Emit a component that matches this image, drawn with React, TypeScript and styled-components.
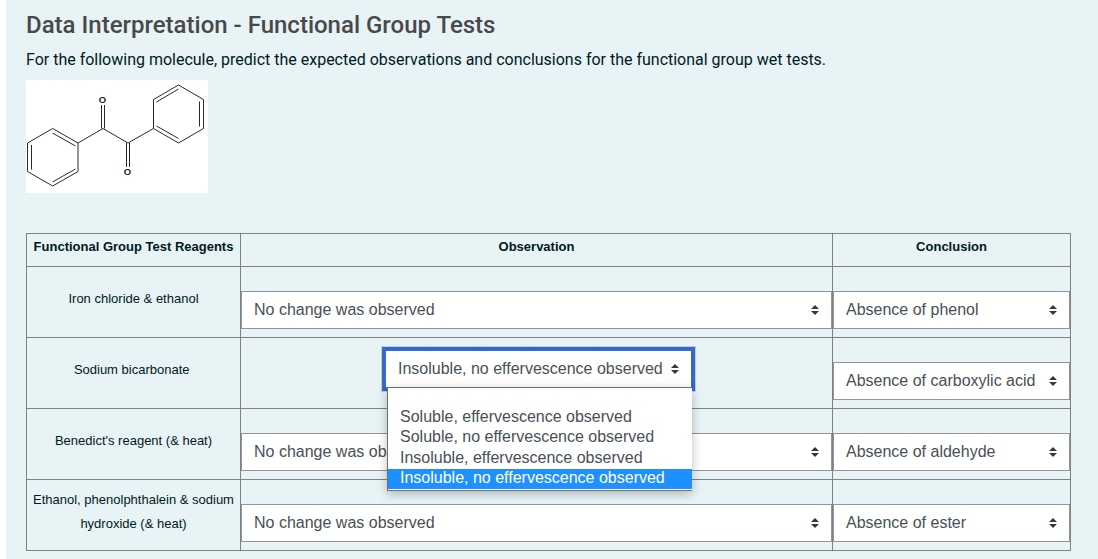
import React from 'react';
import styled, { createGlobalStyle } from 'styled-components';

const GlobalStyle = createGlobalStyle`
    * {
        box-sizing: border-box;
    }
    body {
        margin: 0;
        background-color: #fff;
        overflow: hidden;
    }
`
const Panel = styled.main`
    height: 559px;
    margin-left: 6px;
    padding: 10px 27px 0 20px;
    background-color: #e7f3f5;
    color: #001a1e;
    font-family: 'Roboto', sans-serif;
    overflow: hidden;
`
const Title = styled.h1`
    margin: 0;
    height: 30px;
    font-size: 24px;
    line-height: 30px;
    font-weight: 500;
    color: #494949;
    white-space: nowrap;
`
const Intro = styled.p`
    margin: 8px 0;
    height: 24px;
    font-size: 16px;
    line-height: 24px;
    letter-spacing: -0.005px;
    white-space: nowrap;
`
const Molecule = styled.svg`
    display: block;
    width: 182px;
    height: 113px;
    margin-bottom: 40px;
    background-color: #fff;
`
const Table = styled.div`
    width: 1045px;
    display: grid;
    grid-template-columns: 214px 592px 238px;
    grid-template-rows: 33px repeat(4, 71px);
    border-top: 1px solid #808080;
    border-left: 1px solid #808080;
    font-family: 'Liberation Sans', Arial, sans-serif;
`
const Cell = styled.div`
    border-right: 1px solid #808080;
    border-bottom: 1px solid #808080;
`
const HeadCell = styled(Cell)`
    padding-top: 1px;
    font-size: 13px;
    line-height: 24px;
    font-weight: bold;
    text-align: center;
    white-space: nowrap;
`
const ReagentCell = styled(Cell)`
    display: flex;
    align-items: center;
    justify-content: center;
    padding-bottom: 7px;
    font-size: 13px;
    line-height: 24px;
    text-align: center;
`
const AnswerCell = styled(Cell)<{ $open?: boolean }>`
    display: flex;
    justify-content: center;
    align-items: flex-start;
    padding-top: ${({ $open }) => ($open ? '12px' : '24px')};
    padding-left: ${({ $open }) => ($open ? '4px' : '0')};
`
const SelectWrap = styled.div<{ $open?: boolean }>`
    position: relative;
    width: ${({ $open }) => ($open ? '307px' : '100%')};
`
const SelectBox = styled.div<{ $open?: boolean }>`
    height: 38px;
    padding: 0 12px;
    display: flex;
    align-items: center;
    justify-content: space-between;
    border: 1px solid ${({ $open }) => ($open ? '#2f6bf0' : '#8f959e')};
    background-color: #fff;
    box-shadow: ${({ $open }) => ($open ? '0 0 0 3px #3a66c4, 0 0 0 4px #b9cfea' : 'none')};
    font-size: 16px;
    line-height: 24px;
    color: #495057;
    white-space: nowrap;
`
const Arrows = styled.svg`
    width: 8px;
    height: 10px;
    flex: none;
`
const Menu = styled.ul`
    position: absolute;
    z-index: 1;
    top: 37px;
    left: 2px;
    width: 305px;
    height: 104px;
    margin: 0;
    padding: 0;
    list-style: none;
    border: 1px solid #707070;
    border-right: none;
    background-color: #fff;
    box-shadow: 0 3px 10px rgba(0, 0, 0, 0.25);
    font-size: 16px;
    color: #495057;
`
const Option = styled.li<{ $selected?: boolean }>`
    height: 20.2px;
    padding-left: 12px;
    line-height: 17px;
    white-space: nowrap;
    background-color: ${({ $selected }) => ($selected ? '#1e90ff' : 'transparent')};
    color: ${({ $selected }) => ($selected ? '#fff' : 'inherit')};
`

const rows = [
    { reagent: 'Iron chloride & ethanol', observation: 'No change was observed', conclusion: 'Absence of phenol' },
    { reagent: 'Sodium bicarbonate\u00a0', observation: 'Insoluble, no effervescence observed', conclusion: 'Absence of carboxylic acid', open: true },
    { reagent: "Benedict's reagent (& heat)", observation: 'No change was observed', conclusion: 'Absence of aldehyde' },
    { reagent: 'Ethanol, phenolphthalein & sodium hydroxide (& heat)', observation: 'No change was observed', conclusion: 'Absence of ester' },
];

const options = [
    '',
    'Soluble, effervescence observed',
    'Soluble, no effervescence observed',
    'Insoluble, effervescence observed',
    'Insoluble, no effervescence observed',
];

const Select = ({ value, open }: { value: string; open?: boolean }) => (
    <SelectWrap $open={open}>
        <SelectBox $open={open}>
            {value}
            <Arrows viewBox="0 0 4 5">
                <path fill="#343a40" d="M2 0L0 2h4zm0 5L0 3h4z" />
            </Arrows>
        </SelectBox>
        {open && (
            <Menu>
                {options.map((option) => (
                    <Option key={option} $selected={option === value}>{option}</Option>
                ))}
            </Menu>
        )}
    </SelectWrap>
);

const Benzil = () => (
    <Molecule viewBox="0 0 182 113">
        <g fill="none" stroke="#2a2a2a" strokeWidth="1">
            <path d="M26.7 48.5L52 63v28.5L26.7 106L1.5 91.5V63z" />
            <path d="M26.5 53L49.5 66M49.5 89L26.5 102M5.5 65v24.5" />
            <path d="M152.5 5L177.5 19.5v29L152.5 63L127.5 48.5v-29z" />
            <path d="M130.500 22L152.500 9M173.500 21.500v25M152.500 58.500L130.500 46" />
            <path d="M52 63L77 48.500L102 63L127.500 48.500" />
            <path d="M75.500 48.500V25M78.500 48.500V25M100.500 63v24M103.500 63v24" />
        </g>
        <g fill="#222" fontFamily="Liberation Sans, Arial, sans-serif" fontSize="9.5" fontWeight="bold" textAnchor="middle">
            <text x="76.5" y="23">O</text>
            <text x="101.5" y="95">O</text>
        </g>
    </Molecule>
);

const App = () => (
    <>
        <GlobalStyle />
        <Panel>
            <Title>Data Interpretation - Functional Group Tests</Title>
            <Intro>For the following molecule, predict the expected observations and conclusions for the functional group wet tests.</Intro>
            <Benzil />
            <Table>
                <HeadCell>Functional Group Test Reagents</HeadCell>
                <HeadCell>Observation</HeadCell>
                <HeadCell>Conclusion</HeadCell>
                {rows.map((row) => (
                    <React.Fragment key={row.reagent}>
                        <ReagentCell>{row.reagent}</ReagentCell>
                        <AnswerCell $open={row.open}>
                            <Select value={row.observation} open={row.open} />
                        </AnswerCell>
                        <AnswerCell>
                            <Select value={row.conclusion} />
                        </AnswerCell>
                    </React.Fragment>
                ))}
            </Table>
        </Panel>
    </>
);

export default App;
